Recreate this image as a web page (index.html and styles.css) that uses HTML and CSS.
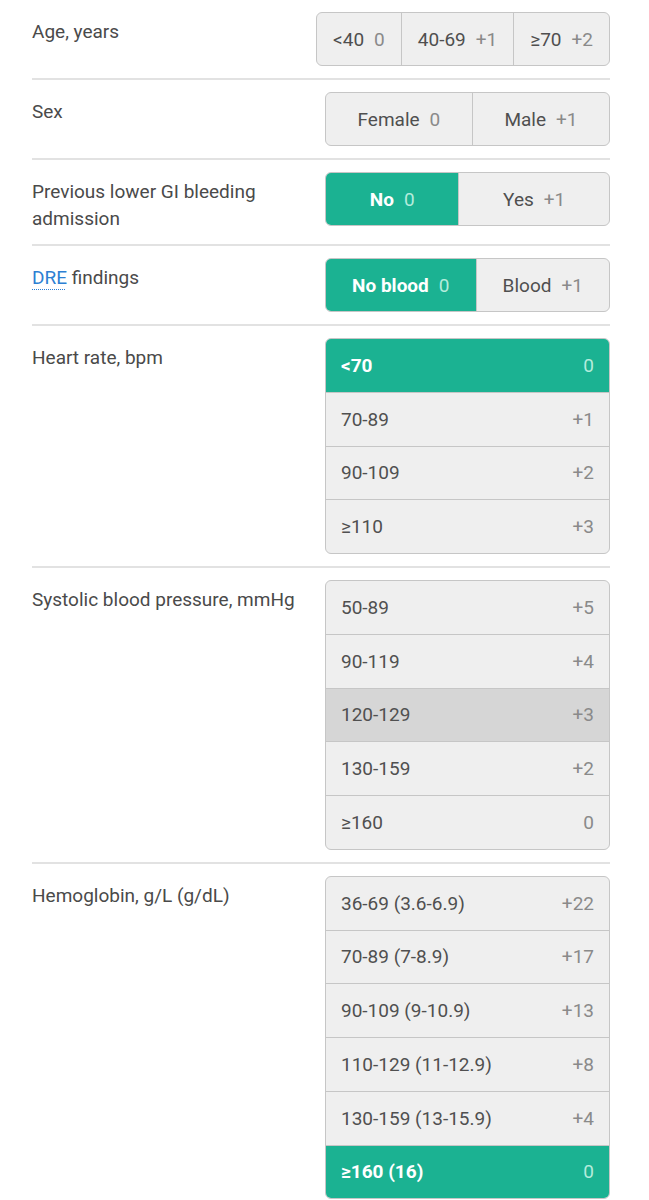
FILE: index.html
```html
<!DOCTYPE html>
<html>
<head>
<meta charset="utf-8">
<link rel="stylesheet" href="styles.css">
</head>
<body>
<div class="page">
  <div class="row">
    <div class="label">Age, years</div>
    <div class="ctrl">
      <div class="seg">
        <div class="btn"><span class="val">&lt;40</span><span class="pts">0</span></div>
        <div class="btn"><span class="val">40-69</span><span class="pts">+1</span></div>
        <div class="btn"><span class="val">≥70</span><span class="pts">+2</span></div>
      </div>
    </div>
  </div>
  <div class="row">
    <div class="label">Sex</div>
    <div class="ctrl">
      <div class="seg">
        <div class="btn"><span class="val">Female</span><span class="pts">0</span></div>
        <div class="btn"><span class="val">Male</span><span class="pts">+1</span></div>
      </div>
    </div>
  </div>
  <div class="row">
    <div class="label">Previous lower GI bleeding admission</div>
    <div class="ctrl">
      <div class="seg">
        <div class="btn on"><span class="val">No</span><span class="pts">0</span></div>
        <div class="btn"><span class="val">Yes</span><span class="pts">+1</span></div>
      </div>
    </div>
  </div>
  <div class="row">
    <div class="label"><span class="abbr">DRE</span> findings</div>
    <div class="ctrl">
      <div class="seg">
        <div class="btn on"><span class="val">No blood</span><span class="pts">0</span></div>
        <div class="btn"><span class="val">Blood</span><span class="pts">+1</span></div>
      </div>
    </div>
  </div>
  <div class="row">
    <div class="label">Heart rate, bpm</div>
    <div class="ctrl">
      <div class="list">
        <div class="item on"><span class="val">&lt;70</span><span class="pts">0</span></div>
        <div class="item"><span class="val">70-89</span><span class="pts">+1</span></div>
        <div class="item"><span class="val">90-109</span><span class="pts">+2</span></div>
        <div class="item"><span class="val">≥110</span><span class="pts">+3</span></div>
      </div>
    </div>
  </div>
  <div class="row">
    <div class="label">Systolic blood pressure, mmHg</div>
    <div class="ctrl">
      <div class="list">
        <div class="item"><span class="val">50-89</span><span class="pts">+5</span></div>
        <div class="item"><span class="val">90-119</span><span class="pts">+4</span></div>
        <div class="item hover"><span class="val">120-129</span><span class="pts">+3</span></div>
        <div class="item"><span class="val">130-159</span><span class="pts">+2</span></div>
        <div class="item"><span class="val">≥160</span><span class="pts">0</span></div>
      </div>
    </div>
  </div>
  <div class="row">
    <div class="label">Hemoglobin, g/L (g/dL)</div>
    <div class="ctrl">
      <div class="list">
        <div class="item"><span class="val">36-69 (3.6-6.9)</span><span class="pts">+22</span></div>
        <div class="item"><span class="val">70-89 (7-8.9)</span><span class="pts">+17</span></div>
        <div class="item"><span class="val">90-109 (9-10.9)</span><span class="pts">+13</span></div>
        <div class="item"><span class="val">110-129 (11-12.9)</span><span class="pts">+8</span></div>
        <div class="item"><span class="val">130-159 (13-15.9)</span><span class="pts">+4</span></div>
        <div class="item on"><span class="val">≥160 (16)</span><span class="pts">0</span></div>
      </div>
    </div>
  </div>
</div>
</body>
</html>
```

FILE: styles.css
```css
html, body {
  margin: 0;
  padding: 0;
  background: #ffffff;
}
body {
  font-family: Roboto, "Noto Sans", sans-serif;
  font-size: 19px;
  color: #4f4f4f;
}
.page {
  width: 578px;
  margin-left: 32px;
}
.row {
  display: flex;
  gap: 14px;
  padding: 12px 0;
  border-bottom: 2px solid #e2e2e2;
}
.label {
  flex: 1 1 auto;
  min-width: 0;
  padding-top: 6px;
  line-height: 27px;
  color: #4a4a4a;
}
.abbr {
  color: #2d7fd3;
  text-decoration: underline dotted #2d7fd3;
  text-underline-offset: 5px;
  text-decoration-thickness: 1px;
}
.ctrl {
  flex: none;
  min-width: 285px;
  display: flex;
}
.seg {
  flex: 1;
  display: flex;
  height: 54px;
  box-sizing: border-box;
  border: 1px solid #c6c6c6;
  border-radius: 6px;
  overflow: hidden;
  background: #efefef;
}
.btn {
  flex: 1 1 auto;
  display: flex;
  align-items: center;
  justify-content: center;
  padding: 0 16px;
  color: #4f4f4f;
  border-left: 1px solid #c6c6c6;
  white-space: nowrap;
}
.btn:first-child {
  border-left: none;
}
.btn .pts {
  margin-left: 10px;
  color: #8a8a8a;
}
.btn.on, .item.on {
  background: #1bb292;
  color: #ffffff;
  font-weight: 700;
}
.btn.on .pts, .item.on .pts {
  color: #b4ecdc;
  font-weight: 400;
}
.list {
  flex: 1;
  border: 1px solid #c6c6c6;
  border-radius: 6px;
  overflow: hidden;
  background: #efefef;
}
.item {
  display: flex;
  align-items: center;
  justify-content: space-between;
  height: 53.75px;
  box-sizing: border-box;
  padding: 0 15px;
  border-top: 1px solid #c6c6c6;
  color: #505050;
}
.item:first-child {
  border-top: none;
  height: 52.75px;
}
.item .pts {
  color: #8a8a8a;
}
.item.hover {
  background: #d6d6d6;
}
```
